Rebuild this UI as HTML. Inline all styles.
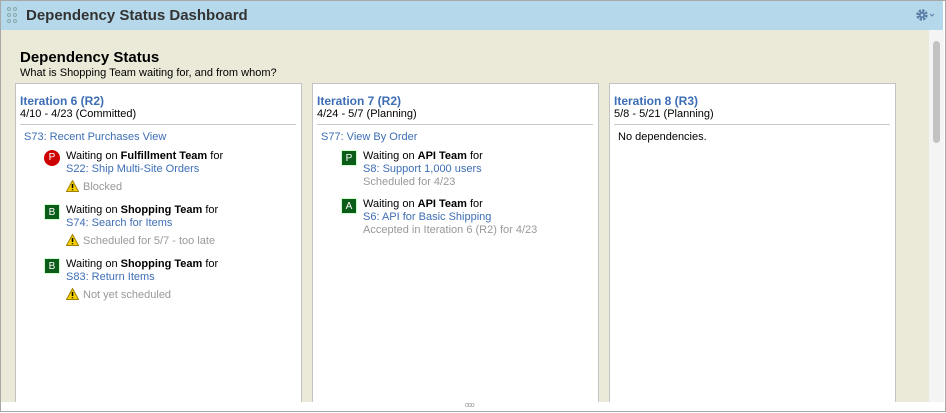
<!DOCTYPE html>
<html><head><style>
*{margin:0;padding:0;box-sizing:border-box}
body{width:946px;height:413px;overflow:hidden;background:#fff;font-family:"Liberation Sans",sans-serif;font-size:11px;color:#000;position:relative}
.frame{position:absolute;left:0;top:0;width:946px;height:412px;border:1px solid #a8a8a8}
.hdr{position:absolute;left:1px;top:1px;width:942px;height:29px;background:#b5d8ea}
.hdr .t{position:absolute;left:25px;top:6px;font-size:15px;font-weight:bold;color:#333}
.dots{position:absolute;left:6px;top:6px;width:10px;height:16px}
.dots i{position:absolute;width:4px;height:4px;border:1px solid #8aa;border-radius:50%}
.content{position:absolute;left:1px;top:30px;width:928px;height:372px;background:#ebe9d8;overflow:hidden}
.sb{position:absolute;left:929px;top:30px;width:15px;height:372px;background:#f4f4f4}
.sb div{position:absolute;left:4px;top:11px;width:7px;height:102px;background:#c2c2c2;border-radius:4px}
h1{position:absolute;left:19px;top:19px;font-size:15px;font-weight:bold}
.sub{position:absolute;left:19px;top:37px;font-size:11px}
.col{position:absolute;top:53px;width:287px;height:340px;background:#fff;border:1px solid #c3c3c3}
.it{color:#3d6eb5;font-weight:bold;font-size:12px;position:absolute;left:4px;top:10px}
.dt{position:absolute;left:4px;top:24px;font-size:11px}
.hr{position:absolute;left:4px;right:5px;top:40px;border-top:1px solid #c8c8c8}
a{color:#3d6eb5;text-decoration:none}
.story{position:absolute;left:8px;top:47px}
.dep{position:absolute;left:28px;width:260px;line-height:13px}
.dep .b{position:absolute;left:0;top:0;width:16px;height:16px;color:#fff;font-size:10px;text-align:center;line-height:16px}
.dep .txt{position:absolute;left:22px;top:0;white-space:nowrap}
.red{background:#c00;border-radius:50%}
.grn{background:#0a5c18;border:1px solid #cfc}
.warn{display:inline-block;width:13px;height:12px;vertical-align:-2px;margin-right:4px}
.g{color:#999}
</style></head><body>
<div class="frame"></div>
<div class="hdr"><div class="dots"><i style="left:0;top:0"></i><i style="left:6px;top:0"></i><i style="left:0;top:6px"></i><i style="left:6px;top:6px"></i><i style="left:0;top:12px"></i><i style="left:6px;top:12px"></i></div>
<div class="t">Dependency Status Dashboard</div>
<svg style="position:absolute;left:914px;top:7px" width="22" height="14" viewBox="0 0 22 14"><circle cx="7" cy="7" r="4.2" fill="none" stroke="#5a7fa8" stroke-width="3" stroke-dasharray="2.2 1.1"/><circle cx="7" cy="7" r="3" fill="#5a7fa8"/><circle cx="7" cy="7" r="1.3" fill="#b5d8ea"/><path d="M15 6l2 2 2-2" stroke="#5a7fa8" fill="none"/></svg>
</div>
<div class="content">
<h1>Dependency Status</h1>
<div class="sub">What is Shopping Team waiting for, and from whom?</div>
<div class="col" style="left:14px">
<div class="it">Iteration 6 (R2)</div><div class="dt">4/10 - 4/23 (Committed)</div><div class="hr"></div>
<div class="story"><a>S73: Recent Purchases View</a></div>
<div class="dep" style="top:66px"><div class="b red">P</div><div class="txt">Waiting on <b>Fulfillment Team</b> for<br><a>S22: Ship Multi-Site Orders</a><br><div style="margin-top:4px" class="g"><svg class="warn" viewBox="0 0 13 12"><path d="M6.5 0.5L12.5 11.5H0.5Z" fill="#f5d000" stroke="#a08000"/><path d="M6.5 4v4M6.5 9.3v1" stroke="#000" stroke-width="1.5"/></svg>Blocked</div></div></div>
<div class="dep" style="top:120px"><div class="b grn">B</div><div class="txt">Waiting on <b>Shopping Team</b> for<br><a>S74: Search for Items</a><br><div style="margin-top:4px" class="g"><svg class="warn" viewBox="0 0 13 12"><path d="M6.5 0.5L12.5 11.5H0.5Z" fill="#f5d000" stroke="#a08000"/><path d="M6.5 4v4M6.5 9.3v1" stroke="#000" stroke-width="1.5"/></svg>Scheduled for 5/7 - too late</div></div></div>
<div class="dep" style="top:174px"><div class="b grn">B</div><div class="txt">Waiting on <b>Shopping Team</b> for<br><a>S83: Return Items</a><br><div style="margin-top:4px" class="g"><svg class="warn" viewBox="0 0 13 12"><path d="M6.5 0.5L12.5 11.5H0.5Z" fill="#f5d000" stroke="#a08000"/><path d="M6.5 4v4M6.5 9.3v1" stroke="#000" stroke-width="1.5"/></svg>Not yet scheduled</div></div></div>
</div>
<div class="col" style="left:311px">
<div class="it">Iteration 7 (R2)</div><div class="dt">4/24 - 5/7 (Planning)</div><div class="hr"></div>
<div class="story"><a>S77: View By Order</a></div>
<div class="dep" style="top:66px"><div class="b grn">P</div><div class="txt">Waiting on <b>API Team</b> for<br><a>S8: Support 1,000 users</a><br><span class="g">Scheduled for 4/23</span></div></div>
<div class="dep" style="top:114px"><div class="b grn">A</div><div class="txt">Waiting on <b>API Team</b> for<br><a>S6: API for Basic Shipping</a><br><span class="g">Accepted in Iteration 6 (R2) for 4/23</span></div></div>
</div>
<div class="col" style="left:608px">
<div class="it">Iteration 8 (R3)</div><div class="dt">5/8 - 5/21 (Planning)</div><div class="hr"></div>
<div class="story" style="left:8px">No dependencies.</div>
</div>
</div>
<div class="sb"><div></div></div>
<div style="position:absolute;left:465px;top:402px;font-size:7px;color:#999;letter-spacing:-1px">ooo</div>
</body></html>
